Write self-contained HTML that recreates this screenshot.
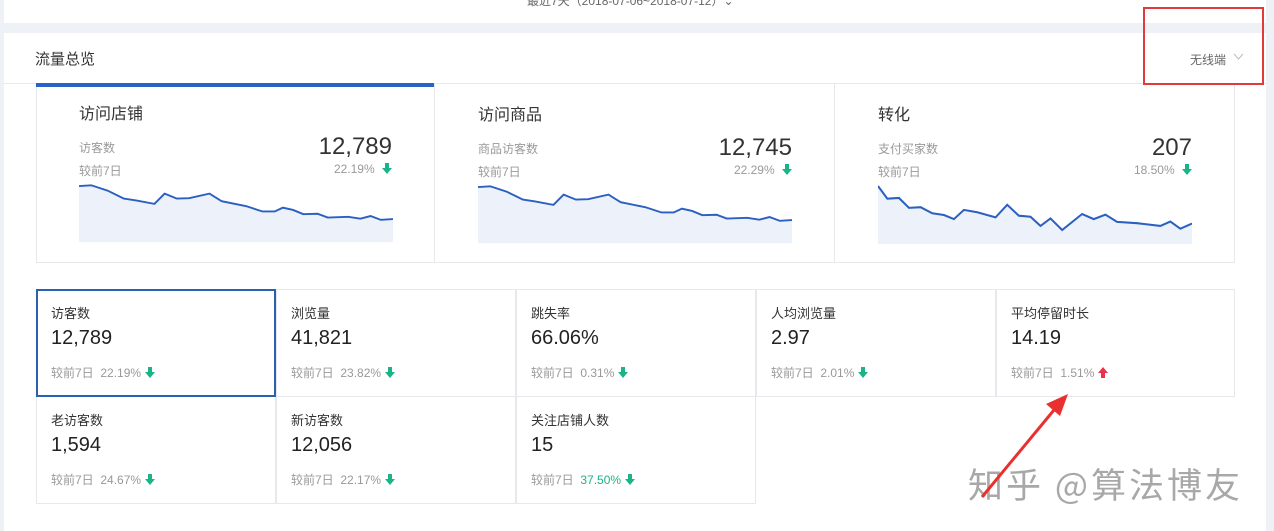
<!DOCTYPE html>
<html><head><meta charset="utf-8"><style>
*{margin:0;padding:0;box-sizing:border-box}
body{width:1274px;height:531px;overflow:hidden;background:#eef1f5;font-family:"Liberation Sans","Noto Sans CJK SC",sans-serif;position:relative;color:#333}
.abs{position:absolute}
.top{left:4px;top:0;width:1262px;height:23px;background:#fff}
.panel{left:4px;top:33px;width:1262px;height:498px;background:#fff}
.card{position:absolute;top:83px;height:180px;border:1px solid #e6e8eb;background:#fff}
.card .t{position:absolute;left:43px;top:17px;font-size:16px;color:#333}
.card .l1{position:absolute;left:43px;top:56px;font-size:12px;color:#999}
.card .l2{position:absolute;left:43px;top:79px;font-size:12px;color:#999}
.card .n{position:absolute;right:42px;top:50px;font-size:24px;color:#333}
.card .p{position:absolute;right:42px;top:79px;font-size:12px;color:#999}
.card svg.ch{position:absolute;left:43px;top:100px}
.cell{position:absolute;width:240px;height:108px;border:1px solid #e6e8eb;background:#fff}
.cell .a{position:absolute;left:14px;top:13px;font-size:13px;color:#333}
.cell .b{position:absolute;left:14px;top:37px;font-size:20px;color:#222}
.cell .c{position:absolute;left:14px;top:74px;font-size:12px;color:#999}
.dn{display:inline-block;vertical-align:-1px;margin-left:4px}
</style></head><body>
<div class="abs top"></div>
<div class="abs" style="left:527px;top:-8px;font-size:12px;color:#666">最近7天（2018-07-06~2018-07-12）⌄</div>
<div class="abs panel"></div>
<div class="abs" style="left:35px;top:48px;font-size:15px;color:#333">流量总览</div>
<div class="abs" style="left:4px;top:83px;width:1262px;height:1px;background:#e8eaed"></div>
<div class="abs" style="left:1190px;top:51px;font-size:12px;color:#666">无线端</div>
<svg class="abs" style="left:1233px;top:53px" width="11" height="8"><path d="M1 1L5.5 6L10 1" fill="none" stroke="#bbb" stroke-width="1"/></svg>

<div class="card" style="left:36px;width:399px;border-top:none">
<div class="abs" style="left:-1px;top:0;width:399px;height:4px;background:#2962c8"></div>
<div class="t" style="left:42px">访问店铺</div><div class="l1" style="left:42px">访客数</div><div class="l2" style="left:42px">较前7日</div>
<div class="n">12,789</div><div class="p">22.19% <svg class="dn" width="10" height="11"><path d="M3 0h4v5h3L5 11L0 5h3z" fill="#1ab38a"/></svg></div>
<svg class="ch" style="left:42px" width="314" height="60" viewBox="190 572 770 158" preserveAspectRatio="none"><path d="M190,580 L220,578 260,592 300,613 330,618 375,627 400,600 430,613 460,612 510,600 540,620 600,633 640,647 670,647 690,637 715,643 740,654 775,653 800,663 850,661 880,666 905,659 930,669 960,667 L960,728 190,728Z" fill="#edf2fa"/><path d="M190,580 L220,578 260,592 300,613 330,618 375,627 400,600 430,613 460,612 510,600 540,620 600,633 640,647 670,647 690,637 715,643 740,654 775,653 800,663 850,661 880,666 905,659 930,669 960,667" fill="none" stroke="#2b5fc0" stroke-width="5"/></svg>
</div>
<div class="card" style="left:434px;width:401px">
<div class="t">访问商品</div><div class="l1">商品访客数</div><div class="l2">较前7日</div>
<div class="n">12,745</div><div class="p">22.29% <svg class="dn" width="10" height="11"><path d="M3 0h4v5h3L5 11L0 5h3z" fill="#1ab38a"/></svg></div>
<svg class="ch" width="314" height="60" viewBox="190 572 770 158" preserveAspectRatio="none"><path d="M190,580 L220,578 260,592 300,613 330,618 375,627 400,600 430,613 460,612 510,600 540,620 600,633 640,647 670,647 690,637 715,643 740,654 775,653 800,663 850,661 880,666 905,659 930,669 960,667 L960,728 190,728Z" fill="#edf2fa"/><path d="M190,580 L220,578 260,592 300,613 330,618 375,627 400,600 430,613 460,612 510,600 540,620 600,633 640,647 670,647 690,637 715,643 740,654 775,653 800,663 850,661 880,666 905,659 930,669 960,667" fill="none" stroke="#2b5fc0" stroke-width="5"/></svg>
</div>
<div class="card" style="left:834px;width:401px">
<div class="t">转化</div><div class="l1">支付买家数</div><div class="l2">较前7日</div>
<div class="n">207</div><div class="p">18.50% <svg class="dn" width="10" height="11"><path d="M3 0h4v5h3L5 11L0 5h3z" fill="#1ab38a"/></svg></div>
<svg class="ch" width="314" height="60" viewBox="142 552 943 176" preserveAspectRatio="none"><path d="M142,558 L170,595 205,593 235,622 270,620 305,638 340,643 370,655 400,628 440,635 495,650 530,613 565,645 600,648 630,675 660,653 695,687 755,640 790,655 825,642 860,663 920,667 990,675 1020,662 1050,683 1085,668 L1085,728 142,728Z" fill="#edf2fa"/><path d="M142,558 L170,595 205,593 235,622 270,620 305,638 340,643 370,655 400,628 440,635 495,650 530,613 565,645 600,648 630,675 660,653 695,687 755,640 790,655 825,642 860,663 920,667 990,675 1020,662 1050,683 1085,668" fill="none" stroke="#2b5fc0" stroke-width="6"/></svg>
</div>

<div class="cell" style="left:276px;top:289px"><div class="a">浏览量</div><div class="b">41,821</div><div class="c">较前7日&nbsp; 23.82%<svg class="dn" width="10" height="11"><path d="M3 0h4v5h3L5 11L0 5h3z" fill="#1ab38a"/></svg></div></div>
<div class="cell" style="left:516px;top:289px"><div class="a">跳失率</div><div class="b">66.06%</div><div class="c">较前7日&nbsp; 0.31%<svg class="dn" width="10" height="11"><path d="M3 0h4v5h3L5 11L0 5h3z" fill="#1ab38a"/></svg></div></div>
<div class="cell" style="left:756px;top:289px"><div class="a">人均浏览量</div><div class="b">2.97</div><div class="c">较前7日&nbsp; 2.01%<svg class="dn" width="10" height="11"><path d="M3 0h4v5h3L5 11L0 5h3z" fill="#1ab38a"/></svg></div></div>
<div class="cell" style="left:996px;top:289px;width:239px"><div class="a">平均停留时长</div><div class="b">14.19</div><div class="c">较前7日&nbsp; 1.51%<svg class="dn" width="10" height="11"><path d="M3 11h4V6h3L5 0L0 6h3z" fill="#e8334a"/></svg></div></div>
<div class="cell" style="left:36px;top:396px"><div class="a">老访客数</div><div class="b">1,594</div><div class="c">较前7日&nbsp; 24.67%<svg class="dn" width="10" height="11"><path d="M3 0h4v5h3L5 11L0 5h3z" fill="#1ab38a"/></svg></div></div>
<div class="cell" style="left:276px;top:396px"><div class="a">新访客数</div><div class="b">12,056</div><div class="c">较前7日&nbsp; 22.17%<svg class="dn" width="10" height="11"><path d="M3 0h4v5h3L5 11L0 5h3z" fill="#1ab38a"/></svg></div></div>
<div class="cell" style="left:516px;top:396px"><div class="a">关注店铺人数</div><div class="b">15</div><div class="c">较前7日&nbsp; <span style="color:#1ab38a">37.50%</span><svg class="dn" width="10" height="11"><path d="M3 0h4v5h3L5 11L0 5h3z" fill="#1ab38a"/></svg></div></div>
<div class="cell" style="left:36px;top:289px;border:2px solid #2b5fb0"><div class="a" style="left:13px;top:12px">访客数</div><div class="b" style="left:13px;top:36px">12,789</div><div class="c" style="left:13px;top:73px">较前7日&nbsp; 22.19%<svg class="dn" width="10" height="11"><path d="M3 0h4v5h3L5 11L0 5h3z" fill="#1ab38a"/></svg></div></div>

<div class="abs" style="left:1143px;top:7px;width:121px;height:78px;border:2px solid #e03a3a"></div>
<div class="abs" style="left:968px;top:458px;font-size:35px;color:#a8a8a8;font-family:'Noto Sans CJK SC',sans-serif;text-shadow:1px 1px 0 #fff,-1px -1px 0 #fff;letter-spacing:3px">知乎 @算法博友</div>
<svg class="abs" style="left:0;top:0" width="1274" height="531"><line x1="982" y1="497" x2="1054" y2="410" stroke="#e8302e" stroke-width="3"/><path d="M1068,394 L1046,404 L1060,416Z" fill="#e8302e"/></svg>
</body></html>
